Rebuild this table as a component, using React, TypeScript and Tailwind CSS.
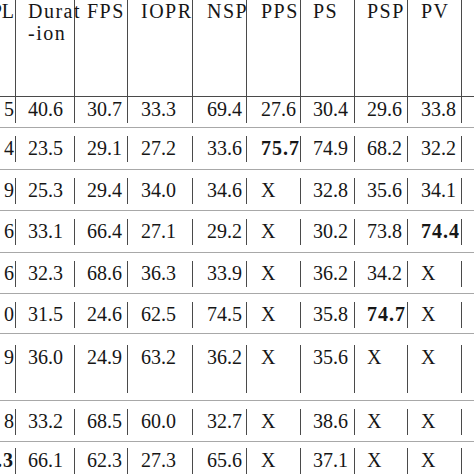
import React from 'react';

type Cell = string | { b: string };

const PAD = ['', 'pl-[12px]', 'pl-[12px]', 'pl-[13px]', 'pl-[14px]', 'pl-[14px]', 'pl-[12px]', 'pl-[12px]', 'pl-[13px]', ''];

const ROWS: { cells: Cell[]; box: string; cell: string }[] = [
  { cells: ['5', '40.6', '30.7', '33.3', '69.4', '27.6', '30.4', '29.6', '33.8'], box: 'pt-0 pb-[4px]', cell: 'h-[26px]' },
  { cells: ['4', '23.5', '29.1', '27.2', '33.6', { b: '75.7' }, '74.9', '68.2', '32.2'], box: 'pt-[8px] pb-[7px]', cell: 'h-[26px]' },
  { cells: ['9', '25.3', '29.4', '34.0', '34.6', 'X', '32.8', '35.6', '34.1'], box: 'pt-[8px] pb-[6px]', cell: 'h-[26px]' },
  { cells: ['6', '33.1', '66.4', '27.1', '29.2', 'X', '30.2', '73.8', { b: '74.4' }], box: 'pt-[8px] pb-[7px]', cell: 'h-[26px]' },
  { cells: ['6', '32.3', '68.6', '36.3', '33.9', 'X', '36.2', '34.2', 'X'], box: 'pt-[8px] pb-[6px]', cell: 'h-[26px]' },
  { cells: ['0', '31.5', '24.6', '62.5', '74.5', 'X', '35.8', { b: '74.7' }, 'X'], box: 'pt-[8px] pb-[5px]', cell: 'h-[26px]' },
  { cells: ['9', '36.0', '24.9', '63.2', '36.2', 'X', '35.6', 'X', 'X'], box: 'pt-[11px] pb-[7px]', cell: 'h-[48px]' },
  { cells: ['8', '33.2', '68.5', '60.0', '32.7', 'X', '38.6', 'X', 'X'], box: 'pt-[8px] pb-[6px]', cell: 'h-[26px]' },
  { cells: [{ b: '.3' }, '66.1', '62.3', '27.3', '65.6', 'X', '37.1', 'X', 'X'], box: 'pt-[6px] pb-[6px]', cell: 'h-[30px]' },
];

const GRID = 'grid grid-cols-[16px_59px_53px_65px_54px_54px_54px_53px_54px_12px]';

function Value({ v }: { v: Cell }) {
  if (typeof v === 'string') return <span>{v}</span>;
  return <span className="font-bold tracking-[1px]">{v.b}</span>;
}

export default function App() {
  const header = ['PL', 'Durat', 'FPS', 'IOPR', 'NSP', 'PPS', 'PS', 'PSP', 'PV'];

  return (
    <div className="w-[474px] h-[474px] overflow-hidden bg-white text-[#161616] text-[20px] font-['Liberation_Serif','Times_New_Roman',serif]">
      {/* header */}
      <div className={`${GRID} h-[97px] border-b-[1.5px] border-[#4a4a4a] leading-[22px] tracking-[1.5px]`}>
        {header.map((h, i) => (
          <div
            key={h}
            className={`h-full border-r-[1.5px] border-[#4a4a4a] whitespace-nowrap ${PAD[i]} ${i === 0 ? 'flex justify-end overflow-hidden tracking-normal pr-[1px]' : ''}`}
          >
            {i === 1 ? (
              <div>
                <div>Durat</div>
                <div>-ion</div>
              </div>
            ) : (
              <span>{h}</span>
            )}
          </div>
        ))}
        <div />
      </div>

      {ROWS.map((row, r) => (
        <div key={r} className={`${row.box} border-b-[1.5px] border-[#a8a8a8]`}>
          <div className={`${GRID} leading-[25px]`}>
            {row.cells.map((c, i) => (
              <div
                key={i}
                className={`${row.cell} border-r-[1.5px] border-[#4a4a4a] whitespace-nowrap ${PAD[i]} ${i === 0 ? 'flex justify-end overflow-hidden pr-[1px]' : ''}`}
              >
                <Value v={c} />
              </div>
            ))}
            <div />
          </div>
        </div>
      ))}
    </div>
  );
}
